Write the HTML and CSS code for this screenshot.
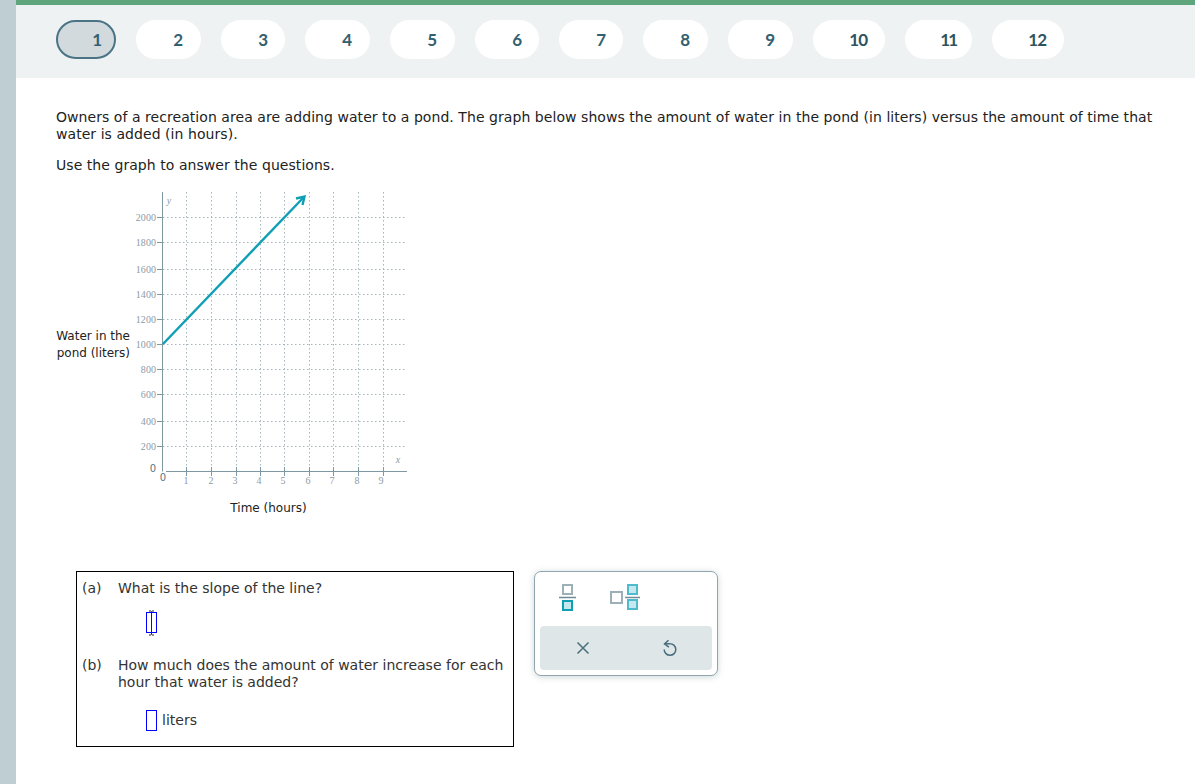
FILE: index.html
```html
<!DOCTYPE html>
<html lang="en">
<head>
    <meta charset="UTF-8">
    <title>Pond question</title>
    <link rel="stylesheet" href="styles.css">
</head>
<body>
<div class="page">
    <div class="side-rail"></div>
    <div class="main">
        <div class="progress-bar"></div>
        <nav class="question-nav">
            <button class="q-pill q-active">1</button>
            <button class="q-pill q-w65">2</button>
            <button class="q-pill q-w64">3</button>
            <button class="q-pill q-w65">4</button>
            <button class="q-pill q-w65">5</button>
            <button class="q-pill q-w64">6</button>
            <button class="q-pill q-w64">7</button>
            <button class="q-pill q-w65">8</button>
            <button class="q-pill q-w65">9</button>
            <button class="q-pill q-w72 q-wide">10</button>
            <button class="q-pill q-w67 q-wide">11</button>
            <button class="q-pill q-w72 q-wide">12</button>
        </nav>

        <div class="content">
            <p class="intro">Owners of a recreation area are adding water to a pond. The graph below shows the amount of water in the pond (in liters) versus the amount of time that water is added (in hours).</p>
            <p class="intro-use">Use the graph to answer the questions.</p>

            <!-- Graph with its axis labels -->
            <div class="graph-row">
                <div class="y-label">Water in the<br>pond (liters)</div>
                <div class="graph-col">
                    <svg class="graph" width="280" height="308" viewBox="130 190 280 308">
                        <g class="grid">
                            <path d="M186.5 192V472M211.5 192V472M236.5 192V472M260.5 192V472M284.5 192V472M309.5 192V472M333.5 192V472M358.5 192V472M383.5 192V472"/>
                            <path d="M163 217.5H405M163 242.5H405M163 269.5H405M163 294.5H405M163 319.5H405M163 344.5H405M163 369.5H405M163 394.5H405M163 421.5H405M163 446.5H405"/>
                        </g>
                        <g class="axis">
                            <path d="M162.5 192V471.5M166 471.5H407"/>
                            <path d="M157 217.5H162M157 242.5H162M157 269.5H162M157 294.5H162M157 319.5H162M157 344.5H162M157 369.5H162M157 394.5H162M157 421.5H162M157 446.5H162"/>
                            <path d="M186.5 467V476M211.5 467V476M236.5 467V476M260.5 467V476M284.5 467V476M309.5 467V476M333.5 467V476M358.5 467V476M383.5 467V476"/>
                        </g>
                        <g class="y-ticks">
                            <text x="156" y="221">2000</text>
                            <text x="156" y="246">1800</text>
                            <text x="156" y="273">1600</text>
                            <text x="156" y="298">1400</text>
                            <text x="156" y="323">1200</text>
                            <text x="156" y="348">1000</text>
                            <text x="156" y="373">800</text>
                            <text x="156" y="398">600</text>
                            <text x="156" y="425">400</text>
                            <text x="156" y="450">200</text>
                        </g>
                        <g class="x-ticks">
                            <text x="186" y="484">1</text>
                            <text x="211" y="484">2</text>
                            <text x="235" y="484">3</text>
                            <text x="259" y="484">4</text>
                            <text x="283" y="484">5</text>
                            <text x="308" y="484">6</text>
                            <text x="332" y="484">7</text>
                            <text x="357" y="484">8</text>
                            <text x="381" y="484">9</text>
                        </g>
                        <text class="zero" x="153" y="472">0</text>
                        <text class="zero" x="163" y="481">0</text>
                        <text class="var-name" x="169" y="204">y</text>
                        <text class="var-name" x="398" y="463">x</text>
                        <g class="plot-line">
                            <path d="M163 344L303 198"/>
                            <path d="M296 198.5L304.5 196.5L302.5 205"/>
                        </g>
                    </svg>
                    <div class="x-label">Time (hours)</div>
                </div>
            </div>

            <div class="answer-row">
                <div class="answer-box">
                    <div class="part">
                        <span class="part-tag">(a)</span>
                        <span class="part-text">What is the slope of the line?</span>
                    </div>
                    <div class="answer-line">
                        <span class="answer-slot">
                            <svg class="ibeam" width="9" height="26" viewBox="0 0 9 26">
                                <path d="M2 1H4L4.5 1.5L5 1H7M4.5 2V24M2 25H4L4.5 24.5L5 25H7"/>
                            </svg>
                        </span>
                    </div>
                    <div class="part part-b">
                        <span class="part-tag">(b)</span>
                        <span class="part-text">How much does the amount of water increase for each hour that water is added?</span>
                    </div>
                    <div class="answer-line answer-line-b">
                        <span class="answer-slot"></span>
                        <span class="unit">liters</span>
                    </div>
                </div>

                <!-- Math keypad -->
                <div class="keypad">
                    <div class="key-row">
                        <svg class="key-icon" width="24" height="30" viewBox="0 0 24 30">
                            <rect class="box-grey" x="7" y="2" width="9" height="9"/>
                            <path class="frac-bar" d="M3 14.5H20"/>
                            <rect class="box-teal" x="7" y="18" width="9" height="9"/>
                        </svg>
                        <svg class="key-icon key-mixed" width="34" height="30" viewBox="0 0 34 30">
                            <rect class="box-grey" x="2" y="9" width="11" height="11"/>
                            <rect class="box-teal-soft" x="19" y="2" width="9" height="9"/>
                            <path class="frac-bar" d="M16 14.5H31"/>
                            <rect class="box-teal-soft" x="19" y="17" width="9" height="9"/>
                        </svg>
                    </div>
                    <div class="tool-strip">
                        <svg class="tool-icon" width="16" height="16" viewBox="0 0 16 16">
                            <path d="M2.5 2.5L13.5 13.5M13.5 2.5L2.5 13.5"/>
                        </svg>
                        <svg class="tool-icon" width="16" height="18" viewBox="0 0 16 18">
                            <path d="M3.5 5Q6 4.5 9 4.7A5.8 5.8 0 1 1 3.2 10.5M7.5 1.2L3.5 5L8 8.2"/>
                        </svg>
                    </div>
                </div>
            </div>
        </div>
    </div>
</div>
</body>
</html>
```

FILE: styles.css
```css
html, body {
    margin: 0;
    padding: 0;
    height: 100%;
    overflow: hidden;
    background-color: #fff;
}

body {
    font-family: "DejaVu Sans", Verdana, sans-serif;
    font-size: 14px;
    line-height: 17px;
    letter-spacing: 0.055px;
    color: #333;
}

.page {
    display: flex;
    height: 784px;
}

.side-rail {
    width: 16px;
    flex-shrink: 0;
    background-color: #bfced3;
}

.main {
    flex: 1;
    min-width: 0;
}

.progress-bar {
    height: 5px;
    background-color: #5fa57c;
}

.question-nav {
    display: flex;
    gap: 20px;
    height: 73px;
    box-sizing: border-box;
    padding: 15px 0 0 40px;
    background-color: #eef2f3;
}

.q-pill {
    width: 65px;
    height: 39px;
    box-sizing: border-box;
    padding: 0 17px 0 0;
    border: none;
    border-radius: 20px;
    background-color: #fff;
    color: #33606f;
    font-family: Lato, sans-serif;
    font-size: 17px;
    font-weight: 700;
    text-align: right;
}

.q-active {
    width: 60px;
    padding-right: 12px;
    border: 2px solid #4a7485;
    background-color: #d2dadd;
}

.q-w64 { width: 64px; }
.q-w65 { width: 65px; padding-right: 18px; }
.q-w67 { width: 67px; padding-right: 16px; letter-spacing: -2px; }
.q-w72 { width: 72px; padding-right: 18px; letter-spacing: -1px; }

.q-wide {
    color: #2d5360;
}

.content {
    padding: 31px 26px 0 40px;
}

.intro {
    margin: 0;
    color: #222;
}

.intro-use {
    margin: 14px 0 0;
    color: #222;
}

.graph-row {
    display: flex;
    align-items: flex-start;
    margin-top: 16px;
}

.y-label {
    width: 74px;
    margin-top: 138px;
    font-size: 12px;
    letter-spacing: 0;
    white-space: nowrap;
    text-align: right;
    color: #222;
}

.graph {
    display: block;
}

.x-label {
    margin-top: 2px;
    font-size: 12px;
    letter-spacing: 0;
    padding-right: 3px;
    text-align: center;
    color: #222;
}

.grid path {
    fill: none;
    stroke: #a3b6bc;
    stroke-width: 1;
    stroke-dasharray: 1.5 2.5;
}

.axis path {
    fill: none;
    stroke: #7f99a3;
    stroke-width: 1;
}

.y-ticks text {
    font-family: "Liberation Serif", serif;
    font-size: 10px;
    fill: #8d9aa3;
    text-anchor: end;
}

.x-ticks text {
    font-family: "Liberation Serif", serif;
    font-size: 10px;
    fill: #8d9aa3;
    text-anchor: middle;
}

.zero {
    font-family: "DejaVu Sans", sans-serif;
    font-size: 10px;
    fill: #5b7480;
    text-anchor: middle;
}

.var-name {
    font-family: "Liberation Serif", serif;
    font-size: 10px;
    font-style: italic;
    fill: #8d9aa3;
    text-anchor: middle;
}

.plot-line path {
    fill: none;
    stroke: #0f9fb5;
    stroke-width: 2.4;
}

.answer-row {
    display: flex;
    align-items: flex-start;
    gap: 20px;
    margin: 54px 0 0 20px;
}

.answer-box {
    width: 438px;
    height: 176px;
    box-sizing: border-box;
    padding: 8px 2px 0 5px;
    border: 1px solid #000;
    letter-spacing: 0;
}

.part {
    display: flex;
}

.part-tag {
    width: 36px;
    flex-shrink: 0;
}

.part-text {
    width: 390px;
    flex: none;
}

.answer-line {
    display: flex;
    align-items: center;
    gap: 5px;
    margin: 15px 0 0 64px;
}

.answer-line-b {
    margin-top: 19px;
}

.part-b {
    margin-top: 24px;
}

.answer-slot {
    position: relative;
    display: block;
    width: 11px;
    height: 21px;
    box-sizing: border-box;
    border: 1px solid #00f;
}

.ibeam {
    position: absolute;
    left: 0;
    top: -3px;
}

.ibeam path {
    fill: none;
    stroke: #222;
    stroke-width: 1;
}

.keypad {
    width: 184px;
    height: 105px;
    box-sizing: border-box;
    padding: 6px 5px 5px;
    border: 1px solid #8fa6ae;
    border-radius: 7px;
    background-color: #fff;
    box-shadow: 0 1px 6px rgba(60, 90, 100, 0.25);
}

.key-row {
    display: flex;
    gap: 29px;
    height: 48px;
    padding-left: 16px;
}

.key-icon {
    display: block;
    margin-top: 5px;
}

.box-grey {
    fill: #fff;
    stroke: #9db0b7;
    stroke-width: 2;
}

.box-teal {
    fill: #c5e8ee;
    stroke: #0f9fb5;
    stroke-width: 2;
}

.box-teal-soft {
    fill: #c5e8ee;
    stroke: #4dbbcd;
    stroke-width: 2;
}

.frac-bar {
    stroke: #6d8c96;
    stroke-width: 1.5;
}

.tool-strip {
    display: flex;
    justify-content: space-around;
    align-items: center;
    height: 44px;
    border-radius: 4px;
    background-color: #dfe6e8;
}

.tool-icon path {
    fill: none;
    stroke: #4a6e7c;
    stroke-width: 1.5;
}
```
